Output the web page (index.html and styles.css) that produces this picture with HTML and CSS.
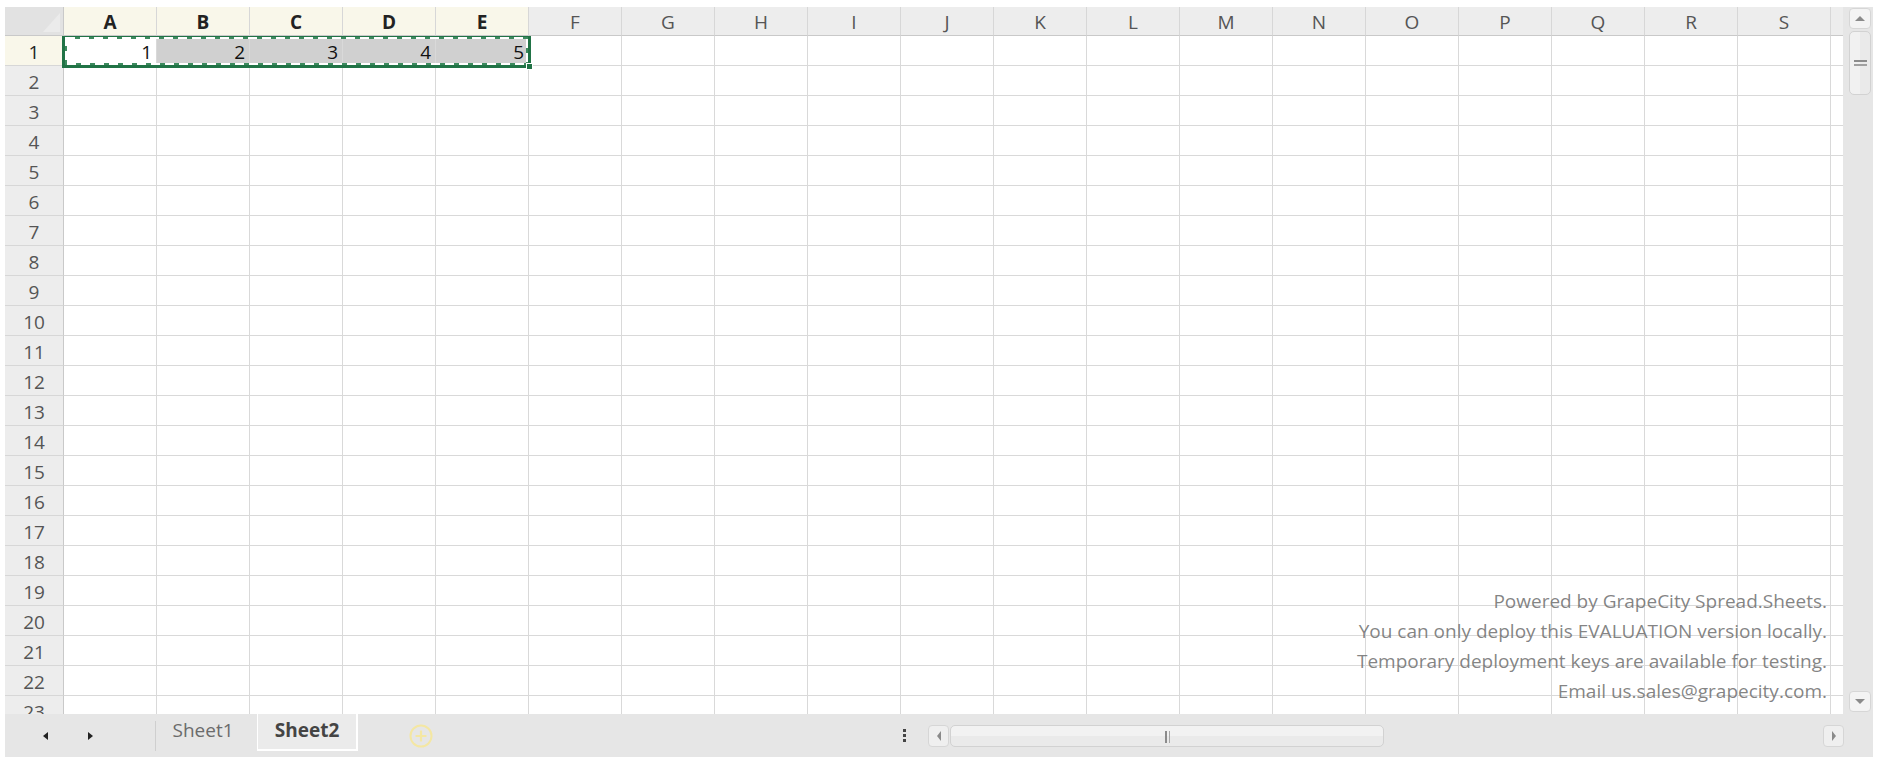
FILE: index.html
```html
<!DOCTYPE html>
<html lang="en">
<head>
<meta charset="utf-8">
<title>Spread.Sheets</title>
<link rel="stylesheet" href="styles.css">
</head>
<body>
<div class="spread">
  <div class="main">
    <div class="viewport">
      <div class="colheads">
        <div class="corner"></div>
        <div class="ch sel-h">A</div>
        <div class="ch sel-h">B</div>
        <div class="ch sel-h">C</div>
        <div class="ch sel-h">D</div>
        <div class="ch sel-h">E</div>
        <div class="ch">F</div>
        <div class="ch">G</div>
        <div class="ch">H</div>
        <div class="ch">I</div>
        <div class="ch">J</div>
        <div class="ch">K</div>
        <div class="ch">L</div>
        <div class="ch">M</div>
        <div class="ch">N</div>
        <div class="ch">O</div>
        <div class="ch">P</div>
        <div class="ch">Q</div>
        <div class="ch">R</div>
        <div class="ch">S</div>
        <div class="ch last"></div>
      </div>
      <div class="content">
        <div class="rowheads">
          <div class="rh sel-h">1</div>
          <div class="rh">2</div>
          <div class="rh">3</div>
          <div class="rh">4</div>
          <div class="rh">5</div>
          <div class="rh">6</div>
          <div class="rh">7</div>
          <div class="rh">8</div>
          <div class="rh">9</div>
          <div class="rh">10</div>
          <div class="rh">11</div>
          <div class="rh">12</div>
          <div class="rh">13</div>
          <div class="rh">14</div>
          <div class="rh">15</div>
          <div class="rh">16</div>
          <div class="rh">17</div>
          <div class="rh">18</div>
          <div class="rh">19</div>
          <div class="rh">20</div>
          <div class="rh">21</div>
          <div class="rh">22</div>
          <div class="rh partial">23</div>
        </div>
        <div class="cells">
          <div class="datarow">
            <div class="cell active">1</div>
            <div class="cell shaded">2</div>
            <div class="cell shaded">3</div>
            <div class="cell shaded">4</div>
            <div class="cell shaded">5</div>
          </div>
          <div class="selection">
            <svg class="ants" width="463" height="28" viewBox="0 0 463 28">
              <rect x="1" y="1" width="461" height="26" fill="none" stroke="#3d8a5e" stroke-width="2"/>
              <rect x="1" y="1" width="461" height="26" fill="none" stroke="#ffffff" stroke-width="2" stroke-dasharray="9 5"/>
            </svg>
            <div class="handle"></div>
          </div>
          <div class="watermark">
            <div>Powered by GrapeCity Spread.Sheets.</div>
            <div>You can only deploy this EVALUATION version locally.</div>
            <div>Temporary deployment keys are available for testing.</div>
            <div>Email us.sales@grapecity.com.</div>
          </div>
        </div>
      </div>
    </div>
    <div class="vscroll">
      <div class="sbtn"><span class="tri-up"></span></div>
      <div class="vthumb"><span class="vgrip"></span></div>
      <div class="sbtn down"><span class="tri-down"></span></div>
    </div>
  </div>
  <div class="tabbar">
    <div class="nav">
      <span class="tri-left"></span>
      <span class="tri-right"></span>
    </div>
    <div class="divider"></div>
    <div class="tab">Sheet1</div>
    <div class="tab current">Sheet2</div>
    <svg class="newtab" width="24" height="24" viewBox="0 0 24 24">
      <circle cx="12" cy="12" r="10.5" fill="none" stroke="#f4e7a3" stroke-width="2"/>
      <path d="M12 6.5v11M6.5 12h11" stroke="#f4e7a3" stroke-width="2.2" fill="none"/>
    </svg>
    <div class="rightgroup">
      <div class="dots"><span></span><span></span><span></span></div>
      <div class="hscroll">
        <div class="hbtn"><span class="stri-left"></span></div>
        <div class="hthumb"><span class="hgrip"></span></div>
        <div class="htrack"></div>
        <div class="hbtn"><span class="stri-right"></span></div>
      </div>
    </div>
  </div>
</div>
</body>
</html>
```

FILE: styles.css
```css
html, body {
  margin: 0;
  padding: 0;
  background: #ffffff;
}

body {
  font-family: "Open Sans", "Noto Sans", sans-serif;
  font-size: 19px;
  color: #222;
}

.spread {
  width: 1868px;
  height: 750px;
  margin: 7px 0 0 5px;
  background: #e6e6e6;
  display: flex;
  flex-direction: column;
  overflow: hidden;
}

.main {
  display: flex;
  height: 707px;
  flex: none;
}

.viewport {
  width: 1838px;
  flex: none;
  overflow: hidden;
  background: #ffffff;
  display: flex;
  flex-direction: column;
}

/* column headers */
.colheads {
  display: flex;
  height: 29px;
  flex: none;
}

.corner {
  width: 59px;
  flex: none;
  box-sizing: border-box;
  background: #e2e2e2;
  border-right: 1px solid #c9c9c9;
  border-bottom: 1px solid #c9c9c9;
  position: relative;
}

.corner::after {
  content: "";
  position: absolute;
  right: 3px;
  bottom: 3px;
  width: 0;
  height: 0;
  border-left: 17px solid transparent;
  border-bottom: 19px solid #ebebeb;
}

.ch {
  width: 93px;
  height: 29px;
  flex: none;
  box-sizing: border-box;
  background: #ededed;
  border-right: 1px solid #d7d7d7;
  border-bottom: 1px solid #c9c9c9;
  text-align: center;
  padding-top: 3px;
  line-height: 24px;
  color: #555;
}

.ch.sel-h {
  background: #f9f7ea;
  color: #222;
  font-weight: 700;
}

/* body */
.content {
  display: flex;
  flex: 1;
  overflow: hidden;
}

.rowheads {
  width: 59px;
  flex: none;
}

.rh {
  height: 30px;
  box-sizing: border-box;
  background: #ededed;
  border-right: 1px solid #c9c9c9;
  border-bottom: 1px solid #d7d7d7;
  text-align: center;
  padding-top: 4px;
  line-height: 25px;
  color: #555;
  overflow: hidden;
}

.rh.partial {
  height: 20px;
  border-bottom: none;
}

.rh.sel-h {
  background: #f9f7ea;
  color: #222;
}

.cells {
  flex: 1;
  position: relative;
  background-color: #ffffff;
  background-image:
    linear-gradient(to right, transparent 92px, #d9d9d9 92px),
    linear-gradient(to bottom, transparent 29px, #d9d9d9 29px);
  background-size: 93px 100%, 100% 30px;
}

.datarow {
  display: flex;
  height: 29px;
}

.cell {
  width: 92px;
  height: 29px;
  margin-right: 1px;
  flex: none;
  box-sizing: border-box;
  text-align: right;
  padding: 4px 4px 0 0;
  line-height: 25px;
  color: #111;
}

.cell.shaded {
  background: #d0d0d0;
}

.selection {
  position: absolute;
  left: -2px;
  top: -2px;
  width: 469px;
  height: 34px;
  box-sizing: border-box;
  border: 3px solid #217346;
}

.ants {
  display: block;
}

.handle {
  position: absolute;
  right: -5px;
  bottom: -5px;
  width: 5px;
  height: 5px;
  background: #217346;
  border: 1px solid #ffffff;
}

.watermark {
  position: absolute;
  top: 550px;
  right: 16px;
  text-align: right;
  line-height: 30px;
  color: rgba(110, 110, 110, 0.85);
  white-space: nowrap;
  pointer-events: none;
}

/* vertical scrollbar */
.vscroll {
  width: 30px;
  flex: none;
  box-sizing: border-box;
  padding: 1px 2px 2px 6px;
  display: flex;
  flex-direction: column;
  background: #e6e6e6;
}

.sbtn {
  height: 21px;
  box-sizing: border-box;
  background: #f3f3f3;
  border: 1px solid #d6d6d6;
  border-radius: 4px;
  display: flex;
  align-items: center;
  justify-content: center;
}

.sbtn.down {
  margin-top: auto;
}

.tri-up {
  width: 0;
  height: 0;
  border-left: 5px solid transparent;
  border-right: 5px solid transparent;
  border-bottom: 5px solid #8a8a8a;
}

.tri-down {
  width: 0;
  height: 0;
  border-left: 5px solid transparent;
  border-right: 5px solid transparent;
  border-top: 5px solid #8a8a8a;
}

.vthumb {
  margin-top: 2px;
  height: 64px;
  box-sizing: border-box;
  background: linear-gradient(to right, #f1f1f1 50%, #eaeaea 50%);
  border: 1px solid #d2d2d2;
  border-radius: 5px;
  display: flex;
  align-items: center;
  justify-content: center;
}

.vgrip {
  width: 13px;
  height: 2px;
  border-top: 2px solid #8c8c8c;
  border-bottom: 2px solid #a0a0a0;
}

/* tab strip */
.tabbar {
  height: 43px;
  flex: none;
  display: flex;
  align-items: flex-start;
  background: #e6e6e6;
}

.nav {
  width: 150px;
  height: 43px;
  flex: none;
  display: flex;
  align-items: center;
  padding-left: 38px;
  box-sizing: border-box;
  gap: 40px;
}

.tri-left {
  width: 0;
  height: 0;
  border-top: 4px solid transparent;
  border-bottom: 4px solid transparent;
  border-right: 5px solid #222;
}

.tri-right {
  width: 0;
  height: 0;
  border-top: 4px solid transparent;
  border-bottom: 4px solid transparent;
  border-left: 5px solid #222;
}

.divider {
  width: 1px;
  height: 30px;
  margin-top: 7px;
  background: #cfcfcf;
  flex: none;
}

.tab {
  width: 94px;
  height: 37px;
  flex: none;
  box-sizing: border-box;
  text-align: center;
  line-height: 33px;
  color: #6b6b6b;
}

.tab.current {
  width: 101px;
  margin-left: 7px;
  background: #ebebeb;
  border-left: 1px solid #ffffff;
  border-right: 2px solid #ffffff;
  border-bottom: 2px solid #ffffff;
  font-weight: 700;
  color: #444;
}

.newtab {
  margin: 10px 0 0 51px;
  flex: none;
}

.rightgroup {
  margin-left: auto;
  margin-right: 29px;
  display: flex;
  align-items: center;
  height: 43px;
}

.dots {
  width: 10px;
  display: flex;
  flex-direction: column;
  align-items: center;
  gap: 2px;
  margin-right: 19px;
  margin-top: -1px;
}

.dots span {
  width: 3px;
  height: 3px;
  background: #444;
}

.hscroll {
  width: 916px;
  height: 22px;
  margin-top: 1px;
  display: flex;
}

.hbtn {
  width: 21px;
  flex: none;
  box-sizing: border-box;
  background: #efefef;
  border: 1px solid #d6d6d6;
  border-radius: 4px;
  display: flex;
  align-items: center;
  justify-content: center;
}

.stri-left {
  width: 0;
  height: 0;
  border-top: 5px solid transparent;
  border-bottom: 5px solid transparent;
  border-right: 4px solid #8a8a8a;
}

.stri-right {
  width: 0;
  height: 0;
  border-top: 5px solid transparent;
  border-bottom: 5px solid transparent;
  border-left: 4px solid #8a8a8a;
}

.hthumb {
  width: 434px;
  flex: none;
  margin-left: 1px;
  box-sizing: border-box;
  background: linear-gradient(to bottom, #f2f2f2 50%, #eaeaea 50%);
  border: 1px solid #d2d2d2;
  border-radius: 5px;
  display: flex;
  align-items: center;
  justify-content: center;
}

.hgrip {
  width: 2px;
  height: 12px;
  border-left: 2px solid #8c8c8c;
  border-right: 1px solid #a8a8a8;
  margin-top: 2px;
}

.htrack {
  flex: 1;
}
```
